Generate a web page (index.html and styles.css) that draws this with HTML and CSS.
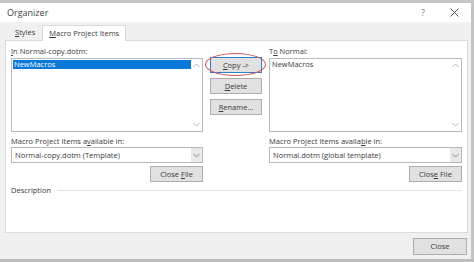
FILE: index.html
```html
<!DOCTYPE html>
<html lang="en">
<head>
  <meta charset="UTF-8" />
  <title>Organizer</title>
  <link rel="stylesheet" href="styles.css">
</head>
<body>
  <div class="edge-top"></div>
  <div class="window">
    <div class="titlebar">
      <span class="title">Organizer</span>
      <span class="help">?</span>
      <span class="close-x">
        <svg width="9" height="9" viewBox="0 0 9 9"><path d="M0.5 0.5 L8.5 8.5 M8.5 0.5 L0.5 8.5" stroke="#555" stroke-width="1" fill="none"/></svg>
      </span>
    </div>

    <div class="body">
      <div class="tabs">
        <div class="tab"><u>S</u>tyles</div>
        <div class="tab active"><u>M</u>acro Project Items</div>
      </div>

      <div class="panel">
        <div class="columns">
          <div class="col">
            <div class="label"><u>I</u>n Normal-copy.dotm:</div>
            <div class="listbox">
              <div class="items">
                <div class="item selected">NewMacros</div>
              </div>
              <div class="scroll">
                <svg width="7" height="5" viewBox="0 0 7 5"><path d="M0.5 4 L3.5 1 L6.5 4" stroke="#b5b5b5" fill="none"/></svg>
                <svg width="7" height="5" viewBox="0 0 7 5"><path d="M0.5 1 L3.5 4 L6.5 1" stroke="#b5b5b5" fill="none"/></svg>
              </div>
            </div>
            <div class="label lower">Macro Project Items a<u>v</u>ailable in:</div>
            <div class="combo">
              <span class="combo-text">Normal-copy.dotm (Template)</span>
              <span class="combo-btn">
                <svg width="7" height="5" viewBox="0 0 7 5"><path d="M0.5 1 L3.5 4 L6.5 1" stroke="#888" fill="none"/></svg>
              </span>
            </div>
            <div class="btn-row"><button class="btn">Close <u>F</u>ile</button></div>
          </div>

          <div class="actions">
            <div class="copy-wrap">
              <button class="btn default"><u>C</u>opy -&gt;</button>
              <span class="mark"></span>
            </div>
            <button class="btn"><u>D</u>elete</button>
            <button class="btn"><u>R</u>ename...</button>
          </div>

          <div class="col">
            <div class="label">T<u>o</u> Normal:</div>
            <div class="listbox">
              <div class="items">
                <div class="item">NewMacros</div>
              </div>
              <div class="scroll">
                <svg width="7" height="5" viewBox="0 0 7 5"><path d="M0.5 4 L3.5 1 L6.5 4" stroke="#b5b5b5" fill="none"/></svg>
                <svg width="7" height="5" viewBox="0 0 7 5"><path d="M0.5 1 L3.5 4 L6.5 1" stroke="#b5b5b5" fill="none"/></svg>
              </div>
            </div>
            <div class="label lower">Macro Project Items availa<u>b</u>le in:</div>
            <div class="combo">
              <span class="combo-text">Normal.dotm (global template)</span>
              <span class="combo-btn">
                <svg width="7" height="5" viewBox="0 0 7 5"><path d="M0.5 1 L3.5 4 L6.5 1" stroke="#888" fill="none"/></svg>
              </span>
            </div>
            <div class="btn-row"><button class="btn">Clos<u>e</u> File</button></div>
          </div>
        </div>

        <div class="description">
          <span>Description</span>
          <span class="rule"></span>
        </div>
      </div>

      <div class="footer">
        <button class="btn close-btn">Close</button>
      </div>
    </div>
  </div>
  <div class="edge-bottom"></div>
</body>
</html>
```

FILE: styles.css
```css
body {
  margin: 0;
  width: 474px;
  height: 262px;
  overflow: hidden;
  background: #c8c8c8;
  font-family: "Open Sans", "Noto Sans", sans-serif;
  font-size: 7.5px;
  color: #3a3a3a;
}
u {
  text-decoration: underline;
  text-underline-offset: 1px;
}
.edge-top {
  height: 3px;
  background: #c6c6c6;
}
.edge-bottom {
  height: 3px;
  background: #bdbdbd;
}
.window {
  border-right: 3px solid #c4c4c4;
  background: #f0f0f0;
}
.titlebar {
  height: 19px;
  background: #fff;
  display: flex;
  align-items: center;
  padding-left: 7px;
  font-size: 9px;
  color: #444;
}
.title {
  flex: 1;
}
.help {
  width: 10px;
  margin-right: 19px;
  color: #777;
  font-size: 9px;
}
.close-x {
  width: 9px;
  margin-right: 12px;
  display: flex;
}
.body {
  padding: 0 3px 0 5px;
}
.tabs {
  display: flex;
  align-items: flex-end;
  height: 18px;
  padding-left: 3px;
}
.tab {
  padding: 0 7px 3px;
}
.tab.active {
  background: #fff;
  border: 1px solid #dadada;
  border-bottom: none;
  padding: 2px 6px 3px;
  margin-bottom: -1px;
  position: relative;
}
.panel {
  background: #fff;
  border: 1px solid #dadada;
  height: 186px;
  padding: 5px 5px 0 5px;
}
.columns {
  display: flex;
  gap: 7px;
}
.col {
  width: 192px;
  display: flex;
  flex-direction: column;
}
.col:last-child {
  width: 193px;
}
.label {
  height: 11px;
  line-height: 10px;
}
.label.lower {
  margin-top: 4px;
}
.listbox {
  height: 72px;
  border: 1px solid #b9b9b9;
  display: flex;
  margin-top: 1px;
}
.items {
  flex: 1;
  padding: 1px 0 0 1px;
}
.item {
  height: 9px;
  line-height: 9px;
  padding-left: 1px;
}
.item.selected {
  background: #0a78d7;
  color: #fff;
}
.scroll {
  width: 11px;
  display: flex;
  flex-direction: column;
  justify-content: space-between;
  align-items: center;
  padding: 4px 0 4px;
}
.combo {
  height: 14px;
  border: 1px solid #b9b9b9;
  display: flex;
  align-items: center;
}
.combo-text {
  flex: 1;
  padding-left: 3px;
}
.combo-btn {
  width: 11px;
  height: 14px;
  background: #e9e9e9;
  display: flex;
  align-items: center;
  justify-content: center;
}
.btn-row {
  display: flex;
  justify-content: flex-end;
  margin-top: 3px;
}
.btn {
  font-family: inherit;
  font-size: 7.5px;
  color: #3a3a3a;
  background: #e1e1e1;
  border: 1px solid #adadad;
  height: 16px;
  width: 53px;
  padding: 0;
}
.actions {
  width: 52px;
  display: flex;
  flex-direction: column;
  gap: 5px;
  padding-top: 11px;
}
.actions .btn {
  width: 52px;
}
.copy-wrap {
  position: relative;
  display: flex;
}
.btn.default {
  border: 1px solid #2f7fd0;
}
.mark {
  position: absolute;
  left: -5px;
  top: -4px;
  width: 61px;
  height: 23px;
  border: 1px solid #d05555;
  border-radius: 50%;
  box-sizing: border-box;
}
.description {
  display: flex;
  align-items: center;
  gap: 6px;
  margin-top: 3px;
}
.rule {
  flex: 1;
  border-top: 1px solid #e3e3e3;
}
.footer {
  height: 26px;
  display: flex;
  justify-content: flex-end;
  align-items: center;
  padding-right: 1px;
}
.close-btn {
  width: 54px;
  height: 17px;
}
```
